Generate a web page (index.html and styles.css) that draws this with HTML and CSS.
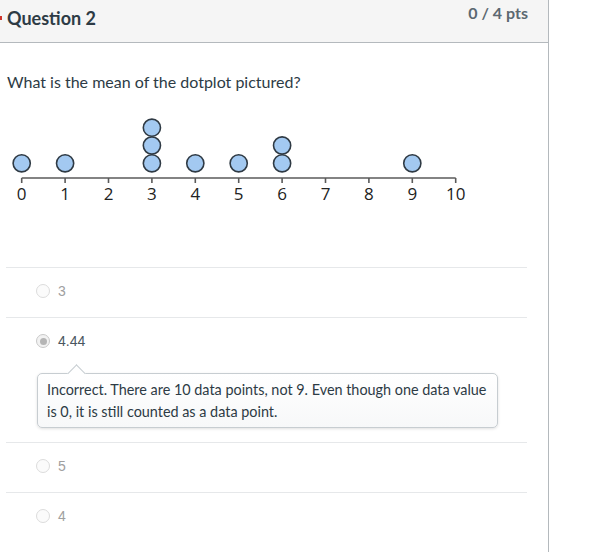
FILE: index.html
```html
<!DOCTYPE html>
<html>
<head>
<meta charset="utf-8">
<link rel="stylesheet" href="styles.css">
</head>
<body>
<div class="card">
  <div class="header">
    <div class="title"><span class="flag"></span>Question 2</div>
    <div class="pts">0 / 4 pts</div>
  </div>
  <div class="content">
    <div class="qtext">What is the mean of the dotplot pictured?</div>
    <svg class="plot" width="470" height="105" viewBox="0 0 470 105">
      <g class="axis">
        <line x1="21.7" y1="68" x2="455.7" y2="68"/>
        <line x1="21.7" y1="68" x2="21.7" y2="73"/>
        <line x1="65.1" y1="68" x2="65.1" y2="73"/>
        <line x1="108.5" y1="68" x2="108.5" y2="73"/>
        <line x1="151.9" y1="68" x2="151.9" y2="73"/>
        <line x1="195.3" y1="68" x2="195.3" y2="73"/>
        <line x1="238.7" y1="68" x2="238.7" y2="73"/>
        <line x1="282.1" y1="68" x2="282.1" y2="73"/>
        <line x1="325.5" y1="68" x2="325.5" y2="73"/>
        <line x1="368.9" y1="68" x2="368.9" y2="73"/>
        <line x1="412.3" y1="68" x2="412.3" y2="73"/>
        <line x1="455.7" y1="68" x2="455.7" y2="73"/>
      </g>
      <g class="labels">
        <text x="21.7" y="90">0</text>
        <text x="65.1" y="90">1</text>
        <text x="108.5" y="90">2</text>
        <text x="151.9" y="90">3</text>
        <text x="195.3" y="90">4</text>
        <text x="238.7" y="90">5</text>
        <text x="282.1" y="90">6</text>
        <text x="325.5" y="90">7</text>
        <text x="368.9" y="90">8</text>
        <text x="412.3" y="90">9</text>
        <text x="455.7" y="90">10</text>
      </g>
      <g class="dots">
        <circle cx="21.7" cy="53.3" r="8.6"/>
        <circle cx="65.1" cy="53.3" r="8.6"/>
        <circle cx="151.9" cy="53.3" r="8.6"/>
        <circle cx="151.9" cy="35.5" r="8.6"/>
        <circle cx="151.9" cy="17.7" r="8.6"/>
        <circle cx="195.3" cy="53.3" r="8.6"/>
        <circle cx="238.7" cy="53.3" r="8.6"/>
        <circle cx="282.1" cy="53.3" r="8.6"/>
        <circle cx="282.1" cy="35.5" r="8.6"/>
        <circle cx="412.3" cy="53.3" r="8.6"/>
      </g>
    </svg>
    <div class="answers">
      <div class="answer">
        <div class="choice"><span class="radio"></span><span class="atext">3</span></div>
      </div>
      <div class="answer">
        <div class="choice"><span class="radio selected"></span><span class="atext chosen">4.44</span></div>
        <div class="feedback">Incorrect. There are 10 data points, not 9. Even though one data value is 0, it is still counted as a data point.</div>
      </div>
      <div class="answer">
        <div class="choice"><span class="radio"></span><span class="atext">5</span></div>
      </div>
      <div class="answer">
        <div class="choice"><span class="radio"></span><span class="atext">4</span></div>
      </div>
    </div>
  </div>
</div>
</body>
</html>
```
FILE: styles.css
```css
html, body {
  margin: 0;
  padding: 0;
  background: #fff;
}
body {
  font-family: Lato, "Open Sans", sans-serif;
  color: #2d3b45;
}
.card {
  width: 549px;
  min-height: 552px;
  border-right: 1px solid #b4b9bd;
  box-sizing: border-box;
}
.header {
  height: 42px;
  background: #f5f5f5;
  border-bottom: 1px solid #b4b9bd;
  display: flex;
  justify-content: space-between;
  align-items: flex-start;
  padding: 0 20px 0 0;
}
.title {
  position: relative;
  font-size: 18px;
  font-weight: 700;
  line-height: 24px;
  padding: 6px 0 0 7px;
  color: #2d3b45;
}
.flag {
  position: absolute;
  left: 0;
  top: 16px;
  width: 2px;
  height: 4px;
  background: #d0352c;
}
.pts {
  font-size: 16px;
  font-weight: 700;
  line-height: 20px;
  padding-top: 3px;
  color: #5b6871;
}
.content {
  padding: 27px 0 0 0;
}
.qtext {
  font-size: 16px;
  line-height: 24px;
  padding-left: 7px;
}
.plot {
  display: block;
  margin-top: 16px;
}
.axis line {
  stroke: #5a5a5a;
  stroke-width: 1.6;
}
.labels text {
  font-family: "Open Sans", sans-serif;
  font-size: 17px;
  fill: #222;
  text-anchor: middle;
}
.dots circle {
  fill: #a3c9f1;
  stroke: #2f3a44;
  stroke-width: 1.6;
}
.answers {
  margin: 52px 21px 0 6px;
}
.answer {
  border-top: 1px solid #e6e8ea;
  padding: 13px 0 16px 30px;
}
.choice {
  display: flex;
  align-items: center;
  height: 20px;
}
.radio {
  width: 12px;
  height: 12px;
  border-radius: 50%;
  border: 1px solid #dcdcdc;
  background: #fbfbfb;
  position: relative;
  flex: none;
}
.radio.selected {
  border-color: #c9c9c9;
  background: #f2f2f2;
}
.radio.selected::after {
  content: "";
  position: absolute;
  left: 2.5px;
  top: 2.5px;
  width: 7px;
  height: 7px;
  border-radius: 50%;
  background: #b5b5b5;
}
.atext {
  font-family: "Liberation Sans", Arial, sans-serif;
  font-size: 14px;
  margin-left: 8px;
  color: #a0a0a0;
}
.atext.chosen {
  color: #4a5660;
}
.feedback {
  position: relative;
  margin: 22px 0 -2px 1px;
  width: 461px;
  box-sizing: border-box;
  border: 1px solid #c7cdd1;
  border-radius: 5px;
  background: linear-gradient(#ffffff, #f7f8f9);
  box-shadow: 0 1px 3px rgba(0,0,0,0.12);
  padding: 5px 10px 4px 9px;
  font-size: 14.4px;
  line-height: 22px;
  color: #2d3b45;
}
.feedback::before {
  content: "";
  position: absolute;
  left: 32px;
  top: -7px;
  width: 12px;
  height: 12px;
  background: #fff;
  border-top: 1px solid #c7cdd1;
  border-left: 1px solid #c7cdd1;
  transform: rotate(45deg);
}
```
